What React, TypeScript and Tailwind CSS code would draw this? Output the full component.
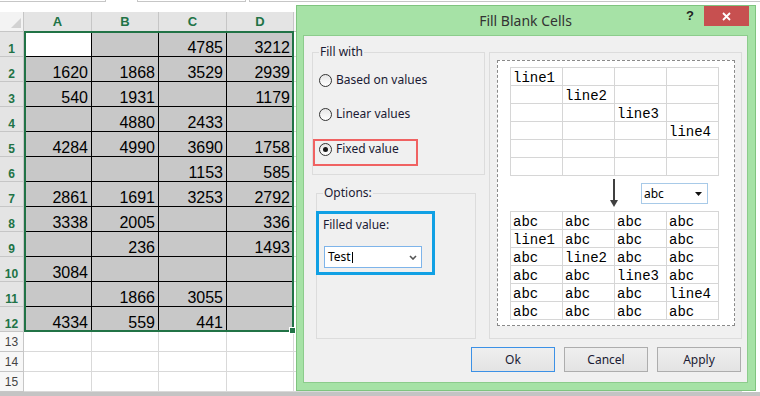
import type { ReactNode } from 'react';

const SHEET: string[][] = [
  ['', '', '4785', '3212'],
  ['1620', '1868', '3529', '2939'],
  ['540', '1931', '', '1179'],
  ['', '4880', '2433', ''],
  ['4284', '4990', '3690', '1758'],
  ['', '', '1153', '585'],
  ['2861', '1691', '3253', '2792'],
  ['3338', '2005', '', '336'],
  ['', '236', '', '1493'],
  ['3084', '', '', ''],
  ['', '1866', '3055', ''],
  ['4334', '559', '441', ''],
];

const COL_W = ['w-[68px]', 'w-[67px]', 'w-[68px]', 'w-[67px]'];
const LETTERS = ['A', 'B', 'C', 'D'];
// columns E..K sit under the dialog, only their grid lines peek out
const EXTRA = ['E', 'F', 'G', 'H', 'I', 'J', 'K'];

const BEFORE = [
  ['line1', '', '', ''],
  ['', 'line2', '', ''],
  ['', '', 'line3', ''],
  ['', '', '', 'line4'],
  ['', '', '', ''],
  ['', '', '', ''],
];

const AFTER = [
  ['abc', 'abc', 'abc', 'abc'],
  ['line1', 'abc', 'abc', 'abc'],
  ['abc', 'line2', 'abc', 'abc'],
  ['abc', 'abc', 'line3', 'abc'],
  ['abc', 'abc', 'abc', 'line4'],
  ['abc', 'abc', 'abc', 'abc'],
];

function SheetRow({ label, values }: { label: number; values?: string[] }) {
  const selected = !!values;
  return (
    <div className={`flex shrink-0 ${selected ? 'h-[25px]' : 'h-[20px]'}`}>
      <div
        className={`flex w-[24px] shrink-0 items-end justify-center border-r border-b border-[#c6c6c6] text-[12px] leading-[12px] ${
          selected ? 'bg-[#e4e4e4] pb-[1px] font-bold text-[#217346]' : 'bg-[#f7f7f7] pb-[3px] text-[#444]'
        }`}
      >
        {label}
      </div>
      {COL_W.map((w, i) => {
        const v = values ? values[i] : '';
        const bg = !selected
          ? 'bg-white border-[#d9d9d9]'
          : label === 1 && i === 0
            ? 'bg-white border-black'
            : 'bg-[#c8c8c8] border-black';
        return (
          <div
            key={i}
            className={`flex ${w} shrink-0 items-end justify-end border-r border-b pr-[3px] text-[16px] leading-[16px] text-black ${bg}`}
          >
            {v}
          </div>
        );
      })}
      {EXTRA.map((c) => (
        <div key={c} className="w-[64px] shrink-0 border-r border-b border-[#d9d9d9] bg-white" />
      ))}
    </div>
  );
}

function Radio({ checked }: { checked?: boolean }) {
  return (
    <span className="flex h-[13px] w-[13px] shrink-0 items-center justify-center rounded-full border border-[#333] bg-linear-to-b from-[#e6e6e6] to-white">
      {checked && <span className="h-[5px] w-[5px] rounded-full bg-[#1a1a1a]" />}
    </span>
  );
}

function Group({
  legend,
  className,
  children,
}: {
  legend?: string;
  className: string;
  children: ReactNode;
}) {
  return (
    <div className={`relative border border-[#dcdcdc] ${className}`}>
      {legend && (
        <span className="absolute -top-[9px] left-[6px] bg-[#f0f0f0] px-[1px] leading-[16px]">{legend}</span>
      )}
      {children}
    </div>
  );
}

function Sample({ rows }: { rows: string[][] }) {
  return (
    <div className="grid w-[209px] grid-cols-[repeat(4,52px)] border-t border-l border-[#d6d6d6] font-['Liberation_Mono',monospace] text-[14px] leading-[18px] text-black">
      {rows.flat().map((t, i) => (
        <div key={i} className="h-[18px] border-r border-b border-[#d6d6d6] pt-[1px] pl-[2px]">
          {t}
        </div>
      ))}
    </div>
  );
}

function DialogButton({ label, focused }: { label: string; focused?: boolean }) {
  return (
    <button
      type="button"
      className={`flex h-[25px] w-[84px] items-center justify-center border bg-linear-to-b from-[#efefef] to-[#e3e3e3] text-[12px] text-[#1a1a33] ${
        focused ? 'border-[#3c91e6]' : 'border-[#adadad]'
      }`}
    >
      {label}
    </button>
  );
}

export default function App() {
  return (
    <div className="relative h-[396px] w-[760px] overflow-hidden bg-white font-['Liberation_Sans',Arial,sans-serif]">
      <div className="flex h-[396px] flex-col">
        {/* formula bar remnants */}
        <div className="flex h-[12px] shrink-0">
          <div className="h-[2px] w-[106px] border-r border-b border-[#c6c6c6]" />
          <div className="ml-[31px] h-[2px] w-[109px] border-x border-b border-[#c6c6c6]" />
          <div className="ml-[3px] h-[2px] flex-1 border-b border-l border-[#c6c6c6]" />
        </div>

        {/* column headers */}
        <div className="flex h-[20px] shrink-0">
          <div className="w-[24px] shrink-0 border-r border-b border-[#c6c6c6] bg-[#f3f3f3]">
            <svg width="23" height="19" viewBox="0 0 23 19">
              <polygon points="21,6 21,16 11,16" fill="#d2d2d2" />
            </svg>
          </div>
          {COL_W.map((w, i) => (
            <div
              key={i}
              className={`flex ${w} shrink-0 items-center justify-center border-r border-b border-r-[#c6c6c6] border-b-[#8a8a8a] bg-[#e4e4e4] text-[13px] font-bold text-[#217346]`}
            >
              {LETTERS[i]}
            </div>
          ))}
          {EXTRA.map((c) => (
            <div key={c} className="w-[64px] shrink-0 border-r border-b border-[#c6c6c6] bg-[#f7f7f7]" />
          ))}
        </div>

        {SHEET.map((vals, r) => (
          <SheetRow key={r} label={r + 1} values={vals} />
        ))}
        <SheetRow label={13} />
        <SheetRow label={14} />
        <SheetRow label={15} />
        <div className="flex-1 bg-[#c4c4c4]" />
      </div>

      {/* selection outline */}
      <div className="absolute top-[31px] left-[24px] h-[301px] w-[270px] border-2 border-[#217346]" />
      <div className="absolute top-[327px] left-[289px] h-[7px] w-[7px] border border-white bg-[#217346]" />

      {/* Fill Blank Cells dialog */}
      <div className="absolute top-[5px] left-[296px] flex h-[386px] w-[460px] flex-col border border-[#7fc47f] bg-[#a6e2a6] pr-[7px] pb-[7px] pl-[6px] font-['Noto_Sans',sans-serif] text-[12px] text-[#1a1a33]">
        <div className="grid h-[29px] shrink-0 grid-cols-[1fr_auto_1fr]">
          <div />
          <div className="flex items-center text-[14px] text-[#333]">Fill Blank Cells</div>
          <div className="flex items-start justify-end">
            <span className="mr-[7px] h-[20px] w-[14px] text-center font-['Liberation_Sans',sans-serif] text-[13px] leading-[20px] font-bold text-[#222]">
              ?
            </span>
            <div className="-mr-[1px] flex h-[20px] w-[45px] items-center justify-center bg-[#c75050]">
              <svg width="9" height="9" viewBox="0 0 9 9">
                <path d="M1 1L8 8M8 1L1 8" stroke="white" strokeWidth="1.8" />
              </svg>
            </div>
          </div>
        </div>

        <div className="flex h-[348px] shrink-0 flex-col border border-[#8ccc8c] bg-[#f0f0f0] pt-[16px] pl-[8px]">
          <div className="flex h-[287px] shrink-0">
            <div className="flex w-[177px] shrink-0 flex-col">
              <Group legend="Fill with" className="h-[123px] w-[173px]">
                <div className="mt-[17px] flex h-[20px] items-center gap-[4px] pl-[6px]">
                  <Radio />
                  <span>Based on values</span>
                </div>
                <div className="mt-[14px] flex h-[20px] items-center gap-[4px] pl-[6px]">
                  <Radio />
                  <span>Linear values</span>
                </div>
                <div className="mt-[15px] h-[27px] w-[105px] border-2 border-[#f06262] pl-[4px]">
                  <div className="flex h-[16px] items-center gap-[4px]">
                    <Radio checked />
                    <span>Fixed value</span>
                  </div>
                </div>
              </Group>

              <Group legend="Options:" className="mt-[18px] ml-[4px] h-[146px] w-[160px]">
                <div className="mt-[17px] -ml-[1px] h-[64px] w-[119px] border-[3px] border-[#10a0e4] pt-[3px] pl-[4px]">
                  <div className="leading-[16px]">Filled value:</div>
                  <div className="mt-[13px] ml-[1px] flex h-[22px] w-[98px] items-center justify-between border border-[#7eb4ea] bg-white pr-[4px] pl-[3px]">
                    <span className="flex items-center text-black">
                      Test
                      <span className="ml-[1px] h-[11px] w-[1px] bg-black" />
                    </span>
                    <svg width="8" height="5" viewBox="0 0 8 5">
                      <path d="M1 1L4 4L7 1" stroke="#555" strokeWidth="1.6" fill="none" />
                    </svg>
                  </div>
                </div>
              </Group>
            </div>

            <Group className="h-[287px] w-[253px] pt-[7px] pl-[7px]">
              <div className="h-[266px] w-[238px] border border-dashed border-[#8a8a8a] bg-white pt-[6px] pl-[12px]">
                <Sample rows={BEFORE} />
                <div className="flex h-[35px]">
                  <svg className="mt-[3px] ml-[99px]" width="10" height="29" viewBox="0 0 10 29">
                    <line x1="5" y1="0" x2="5" y2="23" stroke="#404040" strokeWidth="2" />
                    <polygon points="1,21 9,21 5,28" fill="#404040" />
                  </svg>
                  <div className="mt-[7px] ml-[22px] flex h-[21px] w-[67px] items-center justify-between border border-[#a8cae8] bg-white pr-[5px] pl-[2px] text-black">
                    <span>abc</span>
                    <svg width="7" height="4" viewBox="0 0 7 4">
                      <path d="M0 0H7L3.5 4Z" fill="#111" />
                    </svg>
                  </div>
                </div>
                <Sample rows={AFTER} />
              </div>
            </Group>
          </div>

          <div className="mt-[8px] flex h-[25px] shrink-0 justify-end gap-[9px] pr-[6px]">
            <DialogButton label="Ok" focused />
            <DialogButton label="Cancel" />
            <DialogButton label="Apply" />
          </div>
        </div>
      </div>
    </div>
  );
}
